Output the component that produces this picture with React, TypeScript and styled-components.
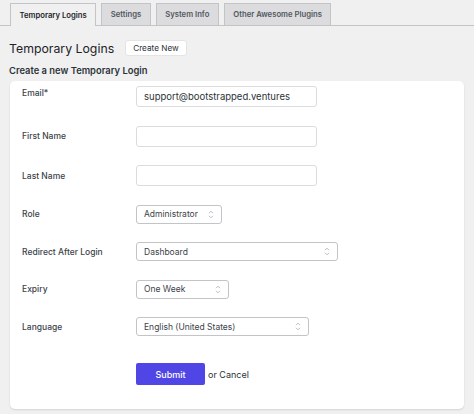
import React from 'react'
import styled, { createGlobalStyle } from 'styled-components'

const GlobalStyle = createGlobalStyle`
  html, body {
    margin: 0;
    padding: 0;
    background: #f0f0f1;
  }
  body {
    font-family: Inter, 'Noto Sans', sans-serif;
    color: #1d2327;
  }
`

const Page = styled.div`
  width: 474px;
  height: 414px;
  overflow: hidden;
  box-sizing: border-box;
`

const TabBar = styled.nav`
  display: flex;
  gap: 5px;
  padding: 3px 10px 0;
  border-bottom: 1px solid #c3c4c7;
  height: 22px;
`

const Tab = styled.div<{ $active?: boolean }>`
  display: flex;
  align-items: center;
  padding: 0 8.5px;
  box-sizing: border-box;
  border: 1px solid #c3c4c7;
  border-bottom: none;
  background: ${(p) => (p.$active ? '#f0f0f1' : '#dcdcde')};
  color: ${(p) => (p.$active ? '#1d2327' : '#50575e')};
  font-size: 7.7px;
  font-weight: 600;
  margin-bottom: ${(p) => (p.$active ? '-1px' : '0')};
  height: ${(p) => (p.$active ? '23px' : '22px')};
`

const Header = styled.div`
  display: flex;
  align-items: center;
  gap: 11px;
  padding: 14px 9px 0;
`

const Title = styled.h1`
  margin: 0;
  font-size: 12.3px;
  font-weight: 400;
  color: #1d2327;
`

const GhostButton = styled.button`
  font-family: inherit;
  font-size: 8.2px;
  color: #2c3338;
  background: #fff;
  border: 1px solid #e4e4e7;
  border-radius: 3px;
  height: 16px;
  padding: 0 7px;
`

const Subtitle = styled.h2`
  margin: 9px 9px 0;
  font-size: 9.4px;
  font-weight: 600;
  color: #2c3338;
`

const Card = styled.form`
  margin: 5px 10px 0;
  background: #fff;
  border-radius: 5px;
  box-shadow: 0 1px 2px rgba(0, 0, 0, 0.12);
  padding: 5px 0 24px;
  display: flex;
  flex-direction: column;
  gap: 18.5px;
`

const Row = styled.div`
  display: grid;
  grid-template-columns: 114px 1fr;
  align-items: center;
  padding-left: 12px;
`

const Label = styled.label<{ $raised?: boolean }>`
  font-size: 8.5px;
  font-weight: 500;
  color: #3c434a;
  position: relative;
  top: ${(p) => (p.$raised ? '-4px' : '0')};
`

const TextInput = styled.input`
  font-family: inherit;
  font-size: 9.5px;
  color: #2c3338;
  width: 181px;
  height: 21px;
  box-sizing: border-box;
  border: 1px solid #dcdcde;
  border-radius: 3px;
  padding: 0 7px;
  outline: none;
`

const SelectBox = styled.div<{ $width: number }>`
  display: flex;
  align-items: center;
  justify-content: space-between;
  width: ${(p) => p.$width}px;
  height: 19px;
  box-sizing: border-box;
  border: 1px solid #c3c4c7;
  border-radius: 3px;
  padding: 0 7px 0 7px;
  font-size: 8.5px;
  color: #3c434a;
  svg {
    flex: none;
  }
`

const Actions = styled.div`
  display: flex;
  align-items: center;
  gap: 3px;
  padding-left: 126px;
  margin-top: 8.5px;
  font-size: 9px;
  color: #2c3338;
`

const Submit = styled.button`
  font-family: inherit;
  width: 69px;
  height: 22px;
  background: #4f46e5;
  color: #fff;
  border: none;
  border-radius: 2px;
  font-size: 9px;
  font-weight: 500;
`

function UpDown() {
  return (
    <svg width="6" height="9" viewBox="0 0 6 9" fill="none" stroke="#a7aaad" strokeWidth="0.8">
      <path d="M1 3.2 L3 1.2 L5 3.2" />
      <path d="M1 5.8 L3 7.8 L5 5.8" />
    </svg>
  )
}

function Select({ value, width }: { value: string; width: number }) {
  return (
    <SelectBox $width={width}>
      <span>{value}</span>
      <UpDown />
    </SelectBox>
  )
}

export default function App() {
  return (
    <Page>
      <GlobalStyle />
      <TabBar>
        <Tab $active>Temporary Logins</Tab>
        <Tab>Settings</Tab>
        <Tab>System Info</Tab>
        <Tab>Other Awesome Plugins</Tab>
      </TabBar>
      <Header>
        <Title>Temporary Logins</Title>
        <GhostButton type="button">Create New</GhostButton>
      </Header>
      <Subtitle>Create a new Temporary Login</Subtitle>
      <Card onSubmit={(e) => e.preventDefault()}>
        <Row>
          <Label $raised>Email*</Label>
          <TextInput defaultValue="support@bootstrapped.ventures" />
        </Row>
        <Row>
          <Label>First Name</Label>
          <TextInput />
        </Row>
        <Row>
          <Label>Last Name</Label>
          <TextInput />
        </Row>
        <Row>
          <Label>Role</Label>
          <Select value="Administrator" width={86} />
        </Row>
        <Row>
          <Label>Redirect After Login</Label>
          <Select value="Dashboard" width={202} />
        </Row>
        <Row>
          <Label>Expiry</Label>
          <Select value="One Week" width={93} />
        </Row>
        <Row>
          <Label>Language</Label>
          <Select value="English (United States)" width={173} />
        </Row>
        <Actions>
          <Submit type="submit">Submit</Submit>
          <span>or Cancel</span>
        </Actions>
      </Card>
    </Page>
  )
}
